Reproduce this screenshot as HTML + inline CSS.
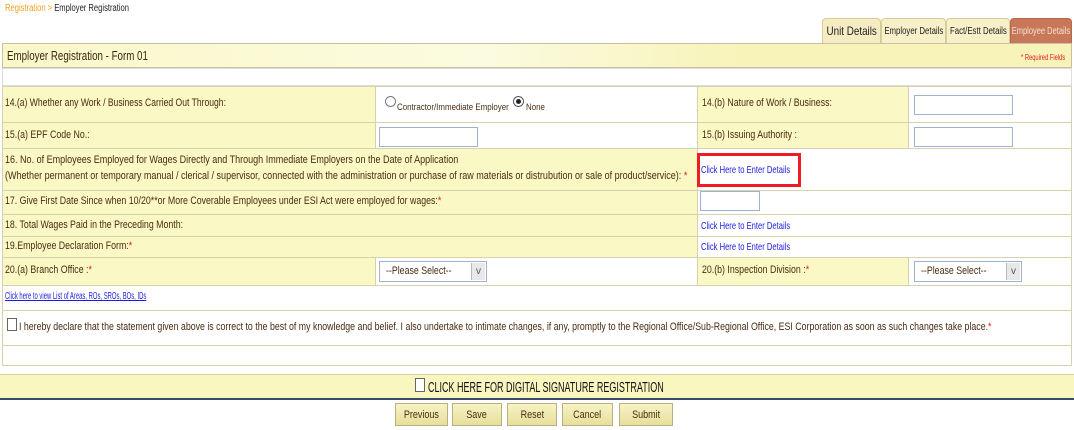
<!DOCTYPE html>
<html><head><style>
*{box-sizing:border-box;margin:0;padding:0}
body{width:1074px;height:430px;background:#fff;position:relative;overflow:hidden;font-family:"Liberation Sans",sans-serif;color:#4a2c12;font-size:11px}
.a{position:absolute}
.y{background:#faf8c4}
.c{position:absolute;border:1px solid #d6d2b0}
.t{position:absolute;white-space:nowrap;transform:scaleX(var(--s,0.8));transform-origin:0 0}
.in{position:absolute;border:1px solid #9fb4cc;background:#fff}
.lk{color:#1a1ae0}
.r{color:#e02020}
.btn{position:absolute;top:403px;height:23px;border:1px solid #b8b080;background:linear-gradient(#f7f3c4,#e6df9c);font-size:11px;display:flex;justify-content:center;align-items:center;color:#4a2c12}
.btn span,.tab span{display:inline-block;white-space:nowrap;transform:scaleX(0.82)}
.sel{position:absolute;border:1px solid #9fb4cc;background:#fff;height:21px;font-size:11px;line-height:19px;padding-left:6px;overflow:hidden}
.sel span{display:inline-block;transform:scaleX(0.8);transform-origin:0 0;white-space:nowrap}
.sel i{position:absolute;right:1px;top:1px;width:14px;height:17px;background:#e8e8e8;border-left:1px solid #bbb;font-style:normal;text-align:center;font-size:10px;line-height:17px;color:#555}
.tab{position:absolute;top:18px;height:25px;border:1px solid #d8cc98;border-bottom:none;background:#f8f0c8;border-radius:4px 4px 0 0;display:flex;justify-content:center;align-items:center;font-size:10px;color:#222;overflow:hidden}
</style></head><body>
<div class="t" style="left:5px;top:3px;font-size:10px;--s:0.76"><span style="color:#f0a020">Registration &gt;</span> <span style="color:#222">Employer Registration</span></div>

<div class="tab" style="left:822px;width:59px;font-size:12px;background:#f5ecc4"><span>Unit Details</span></div>
<div class="tab" style="left:881px;width:65px"><span style="transform:scaleX(0.78)">Employer Details</span></div>
<div class="tab" style="left:946px;width:64px"><span style="transform:scaleX(0.78)">Fact/Estt Details</span></div>
<div class="tab" style="left:1010px;width:62px;background:#c87858;border-color:#b86848;color:#f5e0d0"><span style="transform:scaleX(0.75)">Employee Details</span></div>

<div class="a" style="left:2px;top:43px;width:1070px;height:25px;border:1px solid #c8c0a0;background:linear-gradient(90deg,#faf8c8,#fbfbe0 45%,#f8f3b8 70%,#f8f3b8)"></div>
<div class="t" style="left:7px;top:48px;font-size:13px;color:#3a2810;--s:0.75">Employer Registration - Form 01</div>
<div class="t r" style="left:1021px;top:53px;font-size:8px;--s:0.72">* Required Fields</div>

<div class="c" style="left:2px;top:68px;width:1070px;height:18px;border-color:#ddd"></div>

<div class="c y" style="left:2px;top:86px;width:374px;height:37px"></div>
<div class="c" style="left:375px;top:86px;width:323px;height:37px"></div>
<div class="c y" style="left:697px;top:86px;width:212px;height:37px"></div>
<div class="c" style="left:908px;top:86px;width:164px;height:37px"></div>
<div class="t" style="left:5px;top:97px;--s:0.78">14.(a) Whether any Work / Business Carried Out Through:</div>
<div class="a" style="left:385px;top:96px;width:11px;height:11px;border:1px solid #777;border-radius:50%"></div>
<div class="t" style="left:397px;top:102px;font-size:9px;--s:0.88">Contractor/Immediate Employer</div>
<div class="a" style="left:513px;top:96px;width:11px;height:11px;border:1px solid #555;border-radius:50%"><div class="a" style="left:2px;top:2px;width:5px;height:5px;background:#222;border-radius:50%"></div></div>
<div class="t" style="left:526px;top:102px;font-size:9px;--s:0.88">None</div>
<div class="t" style="left:702px;top:97px;--s:0.8">14.(b) Nature of Work / Business:</div>
<div class="in" style="left:914px;top:95px;width:99px;height:20px"></div>

<div class="c y" style="left:2px;top:122px;width:374px;height:27px"></div>
<div class="c" style="left:375px;top:122px;width:323px;height:27px"></div>
<div class="c y" style="left:697px;top:122px;width:212px;height:27px"></div>
<div class="c" style="left:908px;top:122px;width:164px;height:27px"></div>
<div class="t" style="left:5px;top:129px">15.(a) EPF Code No.:</div>
<div class="in" style="left:379px;top:127px;width:99px;height:20px"></div>
<div class="t" style="left:702px;top:129px">15.(b) Issuing Authority :</div>
<div class="in" style="left:914px;top:127px;width:99px;height:20px"></div>

<div class="c y" style="left:2px;top:148px;width:696px;height:43px"></div>
<div class="c" style="left:697px;top:148px;width:375px;height:43px"></div>
<div class="t" style="left:5px;top:154px;--s:0.82">16. No. of Employees Employed for Wages Directly and Through Immediate Employers on the Date of Application</div>
<div class="t" style="left:5px;top:170px;--s:0.82">(Whether permanent or temporary manual / clerical / supervisor, connected with the administration or purchase of raw materials or distrubution or sale of product/service): <span class="r">*</span></div>
<div class="a" style="left:697px;top:153px;width:104px;height:34px;border:3px solid #ee1c24"></div>
<div class="t lk" style="left:701px;top:165px;font-size:10px;--s:0.76">Click Here to Enter Details</div>

<div class="c y" style="left:2px;top:190px;width:696px;height:25px"></div>
<div class="c" style="left:697px;top:190px;width:375px;height:25px"></div>
<div class="t" style="left:5px;top:195px;--s:0.8">17. Give First Date Since when 10/20**or More Coverable Employees under ESI Act were employed for wages:<span class="r">*</span></div>
<div class="in" style="left:700px;top:191px;width:60px;height:20px"></div>

<div class="c y" style="left:2px;top:214px;width:696px;height:23px"></div>
<div class="c" style="left:697px;top:214px;width:375px;height:23px"></div>
<div class="t" style="left:5px;top:219px">18. Total Wages Paid in the Preceding Month:</div>
<div class="t lk" style="left:701px;top:221px;font-size:10px;--s:0.76">Click Here to Enter Details</div>

<div class="c y" style="left:2px;top:236px;width:696px;height:22px"></div>
<div class="c" style="left:697px;top:236px;width:375px;height:22px"></div>
<div class="t" style="left:5px;top:240px">19.Employee Declaration Form:<span class="r">*</span></div>
<div class="t lk" style="left:701px;top:242px;font-size:10px;--s:0.76">Click Here to Enter Details</div>

<div class="c y" style="left:2px;top:257px;width:374px;height:29px"></div>
<div class="c" style="left:375px;top:257px;width:323px;height:29px"></div>
<div class="c y" style="left:697px;top:257px;width:212px;height:29px"></div>
<div class="c" style="left:908px;top:257px;width:164px;height:29px"></div>
<div class="t" style="left:5px;top:264px">20.(a) Branch Office :<span class="r">*</span></div>
<div class="sel" style="left:379px;top:261px;width:108px"><span>--Please Select--</span><i>v</i></div>
<div class="t" style="left:702px;top:264px">20.(b) Inspection Division :<span class="r">*</span></div>
<div class="sel" style="left:914px;top:261px;width:108px"><span>--Please Select--</span><i>v</i></div>

<div class="c" style="left:2px;top:285px;width:1070px;height:26px"></div>
<div class="t lk" style="left:5px;top:291px;font-size:10px;text-decoration:underline;--s:0.59">Click here to view List of Areas, ROs, SROs, BOs, IDs</div>

<div class="c" style="left:2px;top:310px;width:1070px;height:36px"></div>
<div class="a" style="left:7px;top:318px;width:10px;height:13px;border:1px solid #666;background:#fff"></div>
<div class="t" style="left:19px;top:321px;font-size:11px;--s:0.80">I hereby declare that the statement given above is correct to the best of my knowledge and belief. I also undertake to intimate changes, if any, promptly to the Regional Office/Sub-Regional Office, ESI Corporation as soon as such changes take place.<span class="r">*</span></div>

<div class="c" style="left:2px;top:345px;width:1070px;height:21px"></div>

<div class="a" style="left:0;top:374px;width:1074px;height:26px;background:#faf6c0;border-top:1px solid #d8d0a0;border-bottom:2px solid #3a4a68"></div>
<div class="a" style="left:415px;top:378px;width:10px;height:14px;border:1px solid #666;background:#fff"></div>
<div class="t" style="left:428px;top:379px;font-size:15px;color:#111;--s:0.6">CLICK HERE FOR DIGITAL SIGNATURE REGISTRATION</div>

<div class="btn" style="left:395px;width:53px"><span>Previous</span></div>
<div class="btn" style="left:452px;width:50px"><span>Save</span></div>
<div class="btn" style="left:507px;width:50px"><span>Reset</span></div>
<div class="btn" style="left:562px;width:51px"><span>Cancel</span></div>
<div class="btn" style="left:619px;width:54px"><span>Submit</span></div>
</body></html>
